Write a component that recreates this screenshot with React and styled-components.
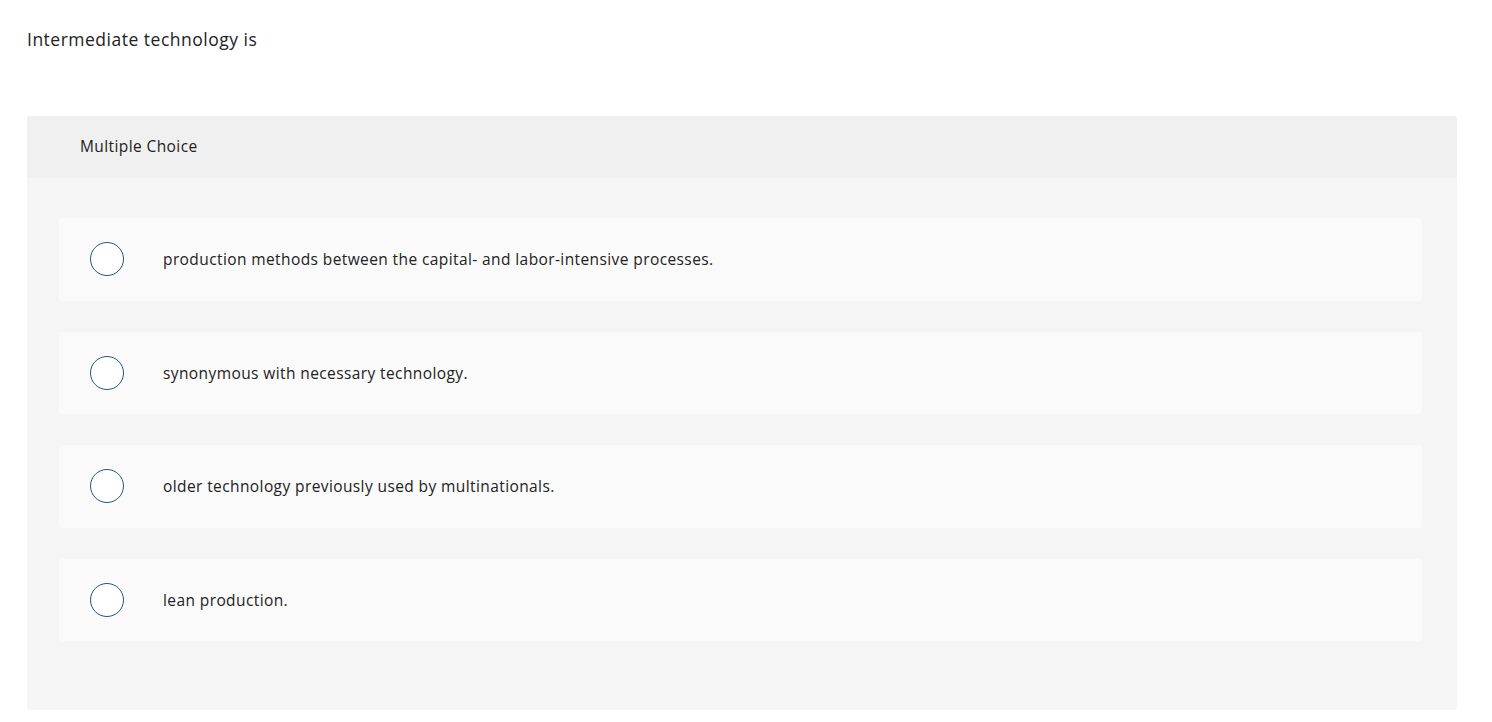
import styled, { createGlobalStyle } from "styled-components";

const GlobalStyle = createGlobalStyle`
  body {
    margin: 0;
    background: #ffffff;
    font-family: "Open Sans", "Liberation Sans", sans-serif;
    color: #222222;
  }
`;

const Page = styled.div`
  padding: 27px 35px 12px 27px;
`;

const Prompt = styled.p`
  margin: 0;
  font-size: 17.5px;
  letter-spacing: 0.5px;
  line-height: 24px;
  color: #222;
`;

const Panel = styled.section`
  margin-top: 65px;
  background: #f5f5f5;
  border-radius: 3px;
  overflow: hidden;
`;

const PanelHeader = styled.div`
  height: 62px;
  background: #f0f0f0;
  display: flex;
  align-items: center;
  padding-left: 53px;
  padding-bottom: 2px;
  box-sizing: border-box;
  font-size: 15.5px;
  letter-spacing: 0.4px;
  color: #222;
`;

const Options = styled.div`
  display: flex;
  flex-direction: column;
  gap: 31px;
  padding: 40px 35px 69px 32px;
`;

const Option = styled.label`
  display: flex;
  align-items: center;
  height: 82.5px;
  padding-left: 31px;
  background: #fafafa;
  border-radius: 4px;
  cursor: pointer;
`;

const Radio = styled.span`
  width: 34px;
  height: 34px;
  box-sizing: border-box;
  border-radius: 50%;
  border: 1px solid #24548a;
  background: #fff;
  flex-shrink: 0;
`;

const OptionText = styled.span`
  margin-left: 39px;
  font-size: 15.5px;
  letter-spacing: 0.4px;
  color: #222;
`;

const choices = [
  "production methods between the capital- and labor-intensive processes.",
  "synonymous with necessary technology.",
  "older technology previously used by multinationals.",
  "lean production.",
];

export default function App() {
  return (
    <>
      <GlobalStyle />
      <Page>
        <Prompt>Intermediate technology is</Prompt>
        <Panel>
          <PanelHeader>Multiple Choice</PanelHeader>
          <Options>
            {choices.map((c) => (
              <Option key={c}>
                <Radio />
                <OptionText>{c}</OptionText>
              </Option>
            ))}
          </Options>
        </Panel>
      </Page>
    </>
  );
}
